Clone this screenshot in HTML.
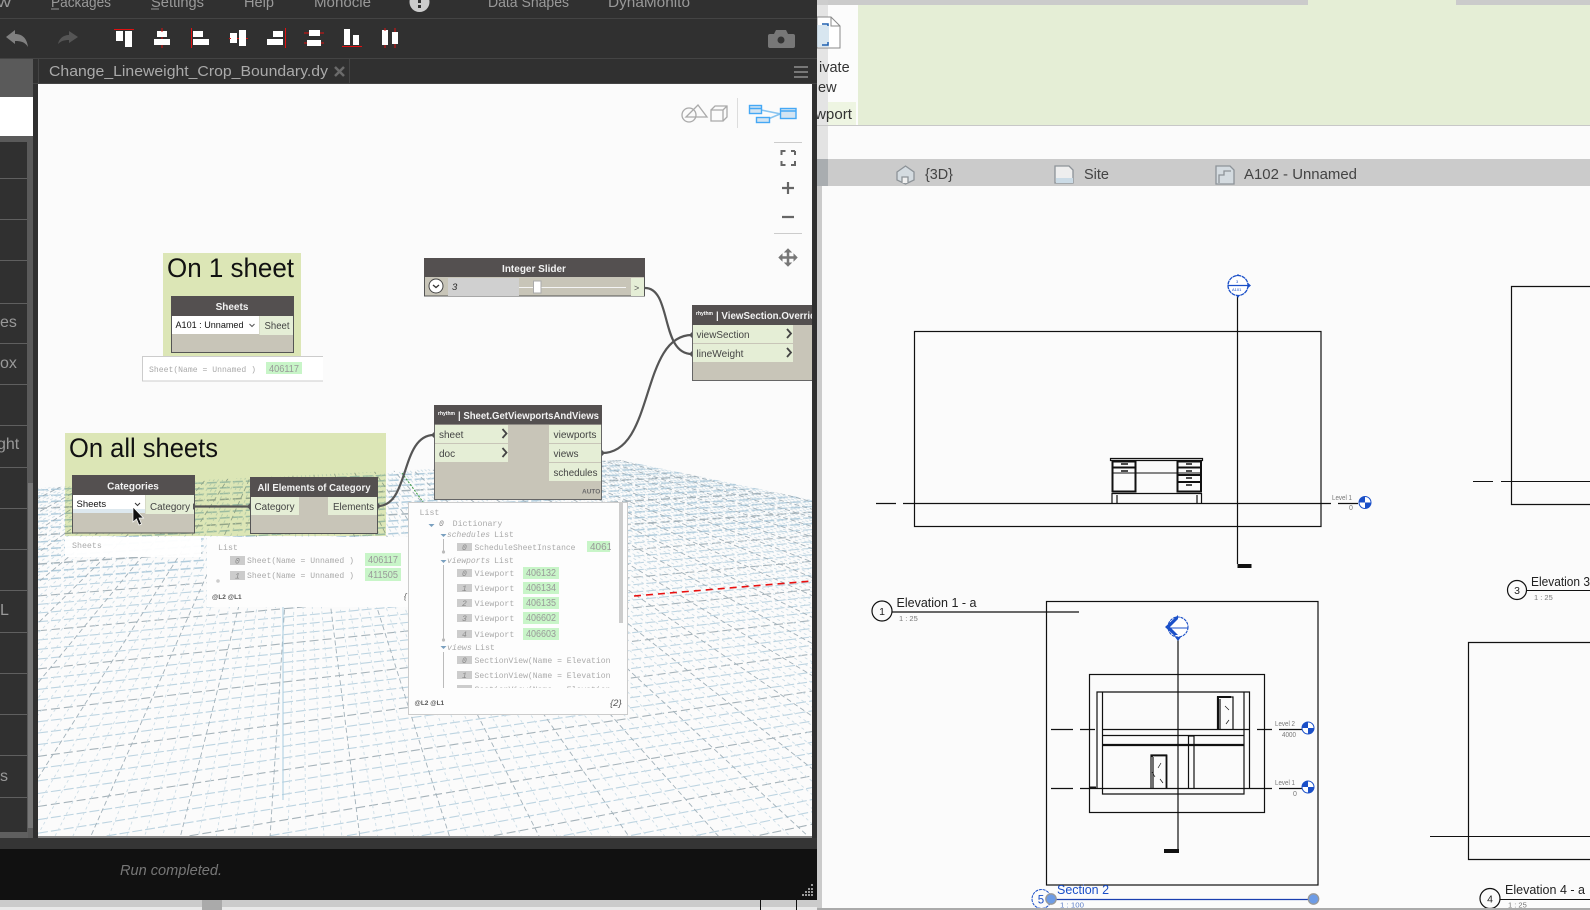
<!DOCTYPE html>
<html><head><meta charset="utf-8"><title>Dynamo on Revit</title>
<style>
html,body{margin:0;padding:0;width:1590px;height:910px;overflow:hidden;background:#fbfbfb}
svg{position:absolute;left:0;top:0;display:block}
text{font-family:"Liberation Sans",sans-serif;white-space:pre}
.m{font-size:15px;fill:#999}
.h{font-size:10px;font-weight:bold;fill:#f2f2f2;text-anchor:middle}
.p{font-size:10px;fill:#444}
.mono{font-family:"Liberation Mono",monospace;font-size:8.3px;fill:#aaa}
.idx{font-family:"Liberation Mono",monospace;font-size:8px;fill:#888;font-style:italic}
.num{font-size:10px;fill:#999}
.at{font-size:6.5px;fill:#555;font-weight:bold}
.lv{font-size:7px;fill:#777}
.el{font-size:12.5px;fill:#222}
.sc{font-size:7.5px;fill:#777}
.tab{font-size:14.5px;fill:#444}
.lab{font-size:16px;fill:#999}
#grid{mix-blend-mode:multiply}
</style></head><body>
<svg width="1590" height="910" viewBox="0 0 1590 910" xmlns="http://www.w3.org/2000/svg">
<defs><clipPath id="cv"><rect x="38" y="84" width="774" height="754"/></clipPath>
<clipPath id="gp"><polygon points="38,488 620,460 812,500 812,838 38,838"/></clipPath>
<clipPath id="vs"><rect x="692" y="300" width="120" height="90"/></clipPath>
<clipPath id="dp"><rect x="410" y="504" width="201" height="184"/></clipPath></defs>

<!-- Revit side -->
<rect x="817" y="0" width="773" height="5" fill="#cbcbcb"/>
<rect x="1308" y="0" width="148" height="5" fill="#e5eed6"/>
<rect x="858" y="5" width="732" height="120" fill="#e5eed6"/>
<rect x="817" y="5" width="41" height="120" fill="#fcfcfc"/>
<rect x="817" y="0" width="11" height="159" fill="#cfcfcf" opacity=".55"/>
<rect x="828" y="102" width="28" height="23" fill="#eef5e2"/>
<path d="M817 17h14l9 9v22h-23z" fill="#fff" stroke="#8a8a8a" stroke-width="1"/>
<path d="M831 17v9h9" fill="none" stroke="#8a8a8a"/>
<path d="M817 25h12v22h-12z" fill="#c7dcea" opacity=".7"/>
<path d="M822 24h6v2M828 42v3h-6" fill="none" stroke="#2060b0" stroke-width="1.5"/>
<text x="819" y="72" font-size="14.5" fill="#333">ivate</text>
<text x="818" y="92" font-size="14.5" fill="#333">ew</text>
<text x="815" y="119" font-size="14.5" fill="#333" textLength="37" lengthAdjust="spacingAndGlyphs">wport</text>
<rect x="817" y="125" width="773" height="1" fill="#c8c8c8"/>
<rect x="817" y="159" width="773" height="27" fill="#cbcbcb"/>
<rect x="817" y="159" width="11" height="27" fill="#a9adb0"/>
<rect x="817" y="186" width="5" height="724" fill="#cbcbcb"/>
<g fill="#d4dbe0" stroke="#8d9398" stroke-width="1.3">
<path d="M897 172l8.500-6 8.500 6v8l-8.500 4-8.500-4z"/><path d="M902 183v-6h6v6" fill="#f0f0f0"/>
<path d="M1056 166h14l4 4v13h-18z" fill="#eee" transform="translate(-1 0)"/>
<path d="M1216 166h14l4 4v14h-18z"/><path d="M1219 183v-8h5v-4h7" fill="none"/>
</g>
<path d="M1056 178h17v5h-17z" fill="#cbdbe6"/>
<text class="tab" x="925" y="179" textLength="28" lengthAdjust="spacingAndGlyphs">{3D}</text>
<text class="tab" x="1084" y="179" textLength="25" lengthAdjust="spacingAndGlyphs">Site</text>
<text class="tab" x="1244" y="179" textLength="113" lengthAdjust="spacingAndGlyphs">A102 - Unnamed</text>

<!-- drawing 1 -->
<g fill="none" stroke="#111" stroke-width="1.2">
<rect x="914.500" y="331.500" width="406.500" height="195"/>
<path d="M876 503.500h20M903 503.500h428M1338 503.500h20"/>
<path d="M1237.500 295v269"/>
<path d="M1110.500 458.500h92v2h-92z"/>
<path d="M1112 473h90" stroke-width="1"/>
<path stroke-width="2" d="M1112.500 461.500h23v30h-23zM1112.500 467.500h23M1177.500 461.500h23.500v30h-23.500zM1177.500 467.500h23.500M1177.500 475h23.500M1177.500 482h23.500"/>
<path d="M1112 493.500h89.500M1112 493v10M1201.500 493v10M1117 495v8M1197 495v8"/>
<path d="M1121 464h7M1121 471h7M1186 464h6M1186 471h6M1186 478h6M1186 485h6" stroke-width="1.500"/>
</g>
<rect x="1237.500" y="564" width="14" height="4" fill="#111"/>
<g fill="#fff" stroke="#1a4fc8" stroke-width="1.300">
<circle cx="1238" cy="285.500" r="10" stroke-dasharray="4 .6"/>
<path d="M1228 285.500h20" fill="none"/>
</g>
<path d="M1248 283l3 2.500-3 2.500zM1236 276l2-2 2 2zM1236 295h4l-2 3z" fill="#1a4fc8"/>
<text x="1236" y="283" font-size="4" fill="#1a4fc8">3</text><text x="1232" y="291" font-size="4" fill="#1a4fc8">A101</text>
<text class="lv" x="1332" y="500" textLength="20" lengthAdjust="spacingAndGlyphs">Level 1</text>
<text class="lv" x="1349" y="510">0</text>

<!-- drawing 2 -->
<path d="M892 612h187" stroke="#111" stroke-width="1.200" fill="none"/>
<circle cx="882" cy="611" r="10" fill="#fbfbfb" stroke="#111" stroke-width="1.200"/>
<text x="882" y="615" font-size="10.500" text-anchor="middle" fill="#222">1</text>
<text class="el" x="896.500" y="607" textLength="80" lengthAdjust="spacingAndGlyphs">Elevation 1 - a</text>
<text class="sc" x="899" y="621">1 : 25</text>
<g fill="none" stroke="#111" stroke-width="1.200">
<rect x="1046.500" y="601.500" width="271.500" height="283.500"/>
<rect x="1089.500" y="674.500" width="175" height="138"/>
<path d="M1097 788v-96h152.500v96"/><path d="M1102.500 692v102h141.500v-102"/>
<path d="M1051 729.500h22M1080 729.500h15M1102 729.500h147.500M1257 729.500h15M1279 729.500h24"/>
<path d="M1051 788.500h22M1080 788.500h192M1279 788.500h24"/>
<path d="M1102 735.500h142"/><path d="M1102 745h142" stroke-width="2.200"/>
<path d="M1188.500 788v-52h5.500v52"/>
<path d="M1217.500 729v-32h15.500v32M1220 729v-30"/><path d="M1218 729v-32h13" stroke-width="2"/>
<path d="M1151 788v-33h15.500v33M1153 788v-31"/><path d="M1152 757v-1.500h14.500v32.500" stroke-width="1.800"/>
<path d="M1178 625v228"/><path d="M1089 787.500h7" stroke-width="2"/>
<path d="M1225 706l4 4M1229 720l-3 4M1161 763l-3 5M1152 772l3 5M1160 779l3 4" stroke-width=".7"/>
</g>
<rect x="1164" y="849" width="15" height="4" fill="#111"/>
<g fill="#fff" stroke="#1a4fc8" stroke-width="1.100">
<circle cx="1178" cy="627" r="10" stroke-dasharray="3 .8"/><path d="M1168 628h20" fill="none"/>
</g>
<path d="M1165 627l13-12v4l-8 8 8 8 -3 0 3 4z" fill="#1a4fc8"/>
<path d="M1175 637h6l-3 4z" fill="#1a4fc8"/>
<text class="lv" x="1275" y="726" textLength="20" lengthAdjust="spacingAndGlyphs">Level 2</text>
<text class="lv" x="1282" y="737" textLength="14" lengthAdjust="spacingAndGlyphs">4000</text>
<text class="lv" x="1275" y="785" textLength="20" lengthAdjust="spacingAndGlyphs">Level 1</text>
<text class="lv" x="1293" y="796">0</text>
<!-- level heads -->
<g><circle cx="1365" cy="502.500" r="6" fill="#fff" stroke="#1a4fc8"/><path d="M1365 502.500v-6a6 6 0 0 0-6 6zM1365 502.500v6a6 6 0 0 0 6-6z" fill="#1a4fc8"/></g>
<g><circle cx="1308" cy="728" r="6" fill="#fff" stroke="#1a4fc8"/><path d="M1308 728v-6a6 6 0 0 0-6 6zM1308 728v6a6 6 0 0 0 6-6z" fill="#1a4fc8"/></g>
<g><circle cx="1308" cy="787" r="6" fill="#fff" stroke="#1a4fc8"/><path d="M1308 787v-6a6 6 0 0 0-6 6zM1308 787v6a6 6 0 0 0 6-6z" fill="#1a4fc8"/></g>

<!-- section 2 -->
<path d="M1051 899.500h262" stroke="#1a3fb0" stroke-width="1.300"/>
<circle cx="1041.500" cy="899" r="9.500" fill="#fbfbfb" stroke="#1a4fc8" stroke-dasharray="3 .8"/>
<text x="1041" y="903.500" font-size="11.500" text-anchor="middle" fill="#1a4fc8">5</text>
<text x="1057" y="894" font-size="13" fill="#1a4fc8" textLength="52" lengthAdjust="spacingAndGlyphs">Section 2</text>
<text x="1060" y="907.500" font-size="7.500" fill="#5f7fc8" textLength="24" lengthAdjust="spacingAndGlyphs">1 : 100</text>
<circle cx="1051" cy="899" r="5.200" fill="#6d9ce6" stroke="#999" stroke-width="1.300"/>
<circle cx="1313.500" cy="899" r="5.200" fill="#6d9ce6" stroke="#999" stroke-width="1.300"/>

<!-- right drawings -->
<g fill="none" stroke="#111" stroke-width="1.200">
<path d="M1590 286.500h-78.500v218h78.500"/>
<path d="M1473 481.500h20M1501 481.500h89" stroke-width="1"/>
<path d="M1590 642.500h-121.500v217h121.500"/>
<path d="M1430 836.500h160" stroke-width="1"/>
<path d="M1527 590.500h63M1500 899.500h90" stroke-width="1"/>
<circle cx="1517" cy="590" r="9.500"/><circle cx="1490" cy="898.500" r="10"/>
</g>
<text x="1517" y="594" font-size="10.500" text-anchor="middle" fill="#222">3</text>
<text x="1490" y="902.500" font-size="10.500" text-anchor="middle" fill="#222">4</text>
<text class="el" x="1531" y="586" textLength="59" lengthAdjust="spacingAndGlyphs">Elevation 3</text>
<text class="sc" x="1534" y="600">1 : 25</text>
<text class="el" x="1505" y="894" textLength="80" lengthAdjust="spacingAndGlyphs">Elevation 4 - a</text>
<text class="sc" x="1508" y="907.500">1 : 25</text>
<rect x="817" y="908" width="773" height="2" fill="#aaa"/>

<!-- bottom strip under dynamo -->
<rect x="0" y="900" width="821" height="7" fill="#cbcbcb"/>
<rect x="0" y="907" width="817" height="3" fill="#e9e9e9"/>
<rect x="202" y="900" width="20" height="10" fill="#aaa"/>
<path d="M760.500 900v10M796.500 900v10" stroke="#111"/>

<!-- Dynamo window -->
<rect x="0" y="0" width="817" height="900" fill="#303030"/>
<rect x="0" y="18" width="817" height="1" fill="#444"/>
<rect x="0" y="58" width="817" height="1" fill="#444"/>
<rect x="38" y="59" width="1" height="25" fill="#444"/><rect x="349" y="59" width="1" height="25" fill="#444"/>
<rect x="0" y="83" width="817" height="1" fill="#444"/>
<text class="m" x="-3" y="7" textLength="14" lengthAdjust="spacingAndGlyphs">w</text>
<text class="m" x="51" y="7" textLength="60" lengthAdjust="spacingAndGlyphs">Packages</text>
<text class="m" x="151" y="7" textLength="53" lengthAdjust="spacingAndGlyphs">Settings</text>
<text class="m" x="244" y="7" textLength="30" lengthAdjust="spacingAndGlyphs">Help</text>
<text class="m" x="314" y="7" textLength="57" lengthAdjust="spacingAndGlyphs">Monocle</text>
<text class="m" x="488" y="7" textLength="81" lengthAdjust="spacingAndGlyphs">Data Shapes</text>
<text class="m" x="608" y="7" textLength="82" lengthAdjust="spacingAndGlyphs">DynaMonito</text>
<path d="M51 9h8M151 9h8" stroke="#999"/>
<circle cx="419.500" cy="2" r="10" fill="#ccc"/>
<path d="M418 0h3v3h-3zM418 5h3v3h-3z" fill="#333"/>

<!-- toolbar icons -->
<path d="M6 37l9-7v4c8 0 12 5 13 13-3-5-7-6-13-6v3z" fill="#808080"/>
<path d="M78 37l-9-6v4c-6 0-10 4-11 9 3-3 6-4 11-4v3z" fill="#555"/>
<g fill="#fff">
<rect x="116" y="31" width="7" height="10"/><rect x="125" y="31" width="7" height="16"/>
<rect x="157" y="31" width="10" height="6"/><rect x="154" y="39" width="16" height="6"/>
<rect x="193" y="31" width="10" height="6"/><rect x="193" y="39" width="16" height="6"/>
<rect x="230" y="33" width="7" height="10"/><rect x="239" y="30" width="7" height="16"/>
<rect x="273" y="31" width="10" height="6"/><rect x="267" y="39" width="16" height="6"/>
<rect x="309" y="30" width="11" height="6"/><rect x="307" y="40" width="14" height="6"/>
<rect x="344" y="29" width="6" height="16"/><rect x="353" y="35" width="6" height="10"/>
<rect x="382" y="30" width="6" height="15"/><rect x="392" y="32" width="6" height="12"/>
</g>
<g stroke="#e01010" stroke-width="1" fill="none">
<path d="M114 29.500h20M162 28v4M162 37v2M162 45v3M191.500 28v20M229 38.500h2M237 38.500h2M246 38.500h2M285.500 28v20M304 33h5M320 33h4M304 43h3M321 43h3M342 46.500h20M385 28v3M385 45v3M395 28v4M395 44v4"/>
</g>
<rect x="768" y="34" width="27" height="14" rx="2" fill="#777"/><path d="M774 34l2-4h10l2 4z" fill="#777"/><circle cx="781" cy="40" r="3.500" fill="#333"/>
<path d="M794 67h14M794 72h14M794 77h14" stroke="#777" stroke-width="2"/>

<text x="49" y="76" font-size="15" fill="#aaa" textLength="279" lengthAdjust="spacingAndGlyphs">Change_Lineweight_Crop_Boundary.dy</text>
<path d="M335 67l9 9M344 67l-9 9" stroke="#6a6a6a" stroke-width="2.500"/>

<!-- left panel -->
<rect x="0" y="59" width="33" height="38" fill="#5a5a5a"/>
<rect x="0" y="97" width="33" height="39" fill="#fff"/>
<rect x="0" y="136" width="33" height="702" fill="#5a5a5a"/>
<rect x="28" y="483" width="5" height="345" fill="#777"/>
<rect x="0" y="142" width="27" height="690" fill="#303030"/>
<g fill="#5f5f5f">
<rect y="178" width="27" height="1"/><rect y="219" width="27" height="1"/><rect y="260" width="27" height="1"/><rect y="303" width="27" height="1"/><rect y="343" width="27" height="1"/><rect y="384" width="27" height="1"/><rect y="425" width="27" height="1"/><rect y="467" width="27" height="1"/><rect y="508" width="27" height="1"/><rect y="549" width="27" height="1"/><rect y="590" width="27" height="1"/><rect y="632" width="27" height="1"/><rect y="673" width="27" height="1"/><rect y="714" width="27" height="1"/><rect y="755" width="27" height="1"/><rect y="797" width="27" height="1"/>
</g>
<text class="lab" x="0" y="327">es</text><text class="lab" x="0" y="368">ox</text><text class="lab" x="-3" y="449">ght</text><text class="lab" x="0" y="615">L</text><text class="lab" x="0" y="781">s</text>

<!-- canvas -->
<rect x="38" y="84" width="774" height="754" fill="#fbfbfb"/>
<rect x="163" y="253" width="138" height="103" fill="#dce6b6"/>
<rect x="65" y="433" width="321" height="103" fill="#dce6b6"/>
<g id="grid" clip-path="url(#gp)"></g>
<rect x="38" y="836" width="774" height="2" fill="#888"/>
<g clip-path="url(#cv)">
<path d="M283 607v193" stroke="#a8cde0"/>
<path d="M634 596L812 581" stroke="#e81010" stroke-width="1.600" stroke-dasharray="7 5"/>
<path d="M402 473L423 502" stroke="#3a9a3a" stroke-dasharray="2 1.500"/>
</g>
<text x="167" y="277" font-size="27" fill="#111" textLength="127" lengthAdjust="spacingAndGlyphs">On 1 sheet</text>
<text x="69" y="457" font-size="27" fill="#111" textLength="149" lengthAdjust="spacingAndGlyphs">On all sheets</text>

<!-- canvas icons -->
<g fill="none" stroke="#aaa" stroke-width="1.300">
<circle cx="689" cy="115" r="7"/><path d="M698 105l9 12h-21z"/>
<path d="M711 110h12v11h-12zM711 110l4-4h12v11l-4 4M723 110l4-4"/>
</g>
<rect x="737" y="98" width="1" height="30" fill="#ddd"/>
<g fill="#d3e4f2" stroke="#45a8f5" stroke-width="1.400">
<path d="M761 110l20 4M768 119l12-5" stroke="#88c4f0" fill="none" stroke-width="1.500"/>
<rect x="749.500" y="105.500" width="12" height="8"/><rect x="756.500" y="117.500" width="13" height="5"/><rect x="780.500" y="108.500" width="15.500" height="10"/>
<path d="M750 108.500h11M781 111h15"/>
</g>
<rect x="774" y="142" width="28" height="1" fill="#ccc"/><rect x="774" y="233" width="28" height="1" fill="#ccc"/>
<path d="M781.500 155v-4h4M795 151h-4M795 151v4M781.500 161v4h4M795 161v4h-4" fill="none" stroke="#666" stroke-width="2"/>
<path d="M788 182v12M782 188h12M782 217h12" stroke="#666" stroke-width="2.200"/>
<path d="M788 251v13M781 257.500h14" stroke="#777" stroke-width="2.500"/>
<path d="M785 252l3-3 3 3zM785 263l3 3 3-3zM782 254.500l-3 3 3 3zM794 254.500l3 3-3 3z" fill="#777" stroke="#777"/>

<!-- wires -->
<g fill="none" stroke="#555" stroke-width="2.200">
<path d="M195 506.500H250"/>
<path d="M378 506C410 506 400 435 434 435"/>
<path d="M602 453C655 453 640 335 692 335"/>
<path d="M645 288C672 288 660 354 692 354"/>
</g>

<!-- Sheets node -->
<rect x="171.500" y="296.500" width="122" height="56" fill="#c8c5b8" stroke="#555"/>
<rect x="171" y="296" width="123" height="20" fill="#545050"/>
<text class="h" x="232" y="310">Sheets</text>
<rect x="172" y="316" width="87" height="18" fill="#fff"/>
<rect x="259.500" y="316" width="33.500" height="19" fill="#e5eed6"/>
<text x="175.500" y="328" font-size="9.500" fill="#111" textLength="68" lengthAdjust="spacingAndGlyphs">A101 : Unnamed</text>
<path d="M249.500 324l2.500 2.500 2.500-2.500" fill="none" stroke="#555"/>
<text class="p" x="264.500" y="329" textLength="25" lengthAdjust="spacingAndGlyphs">Sheet</text>
<path d="M323 356.500H142.500v24.500H323" fill="#fff" stroke="#ccc"/>
<text class="mono" x="149" y="372" textLength="107" lengthAdjust="spacingAndGlyphs">Sheet(Name = Unnamed )</text>
<rect x="266" y="362" width="36" height="12" fill="#c8f5c8"/>
<text class="num" x="269" y="372" textLength="30" lengthAdjust="spacingAndGlyphs">406117</text>

<!-- Slider node -->
<rect x="424.500" y="258.500" width="220" height="37.500" fill="#c8c5b8" stroke="#555"/>
<rect x="424" y="258" width="221" height="19" fill="#545050"/>
<text class="h" x="534" y="272">Integer Slider</text>
<rect x="448" y="278" width="71" height="18" fill="#d0d0d0"/>
<rect x="631" y="278" width="13" height="18" fill="#e5eed6"/>
<circle cx="436" cy="286" r="7" fill="#fff" stroke="#444"/>
<path d="M433 285l3 2.500 3-2.500" fill="none" stroke="#333" stroke-width="1.300"/>
<text x="452" y="290" font-size="9.500" font-style="italic" fill="#222">3</text>
<path d="M519 287.500h107" stroke="#f4f4f4"/>
<rect x="533.500" y="281" width="7.500" height="12" fill="#fff" stroke="#aaa"/>
<text x="634" y="291" font-size="9" fill="#555">&gt;</text>

<!-- Categories node -->
<rect x="72.500" y="475.500" width="122" height="57.500" fill="#c8c5b8" stroke="#555"/>
<rect x="72" y="475" width="123" height="20" fill="#545050"/>
<text class="h" x="133" y="489.500">Categories</text>
<rect x="73" y="495" width="72" height="17" fill="#fff"/><rect x="73" y="509" width="72" height="4" fill="#dde8ee"/>
<rect x="145.500" y="495" width="48.500" height="19" fill="#e5eed6"/>
<text x="76.500" y="507" font-size="9.500" fill="#111">Sheets</text>
<path d="M135 503l2.500 2.500 2.500-2.500" fill="none" stroke="#333"/>
<text class="p" x="150" y="510" textLength="40" lengthAdjust="spacingAndGlyphs">Category</text>
<path d="M133 507v15l3.500-3 2.500 6 2.500-1-2.500-6h4.500z" fill="#111" stroke="#fff" stroke-width=".7"/>

<!-- All Elements node -->
<rect x="250.500" y="477.500" width="127" height="56" fill="#c8c5b8" stroke="#555"/>
<rect x="250" y="477" width="128" height="20" fill="#545050"/>
<text class="h" x="314" y="491" textLength="113" lengthAdjust="spacingAndGlyphs">All Elements of Category</text>
<rect x="251" y="497" width="48" height="18" fill="#e5eed6"/><rect x="328" y="497" width="49" height="18" fill="#e5eed6"/>
<text class="p" x="254.500" y="510" textLength="40" lengthAdjust="spacingAndGlyphs">Category</text>
<text class="p" x="333" y="510" textLength="41" lengthAdjust="spacingAndGlyphs">Elements</text>
<path d="M193 503l3 3.500-3 3.500zM250 503l-3 3.500 3 3.500zM378 503l3 3-3 3z" fill="#555"/>

<!-- GetViewports node -->
<rect x="434.500" y="405.500" width="167" height="94" fill="#c8c5b8" stroke="#666"/>
<rect x="434" y="405" width="168" height="19.500" fill="#545050"/>
<text x="438" y="415" font-size="5" font-weight="bold" fill="#fff">rhythm</text>
<text x="458" y="419" font-size="10.500" font-weight="bold" fill="#f2f2f2" textLength="141" lengthAdjust="spacingAndGlyphs">| Sheet.GetViewportsAndViews</text>
<g fill="#e5eed6">
<rect x="435" y="425" width="73" height="18"/><rect x="435" y="444" width="73" height="18"/>
<rect x="549" y="425" width="52" height="18"/><rect x="549" y="444" width="52" height="18"/><rect x="549" y="463" width="52" height="18"/>
</g>
<text class="p" x="439" y="438">sheet</text><text class="p" x="439" y="457">doc</text>
<text class="p" x="553.500" y="438" textLength="43" lengthAdjust="spacingAndGlyphs">viewports</text>
<text class="p" x="553.500" y="457">views</text>
<text class="p" x="553.500" y="476" textLength="44" lengthAdjust="spacingAndGlyphs">schedules</text>
<text x="582" y="493.500" font-size="6.500" font-weight="bold" fill="#6b6b6b">AUTO</text>
<path d="M502.500 429l4 4.500-4 4.500M502.500 448l4 4.500-4 4.500" fill="none" stroke="#444" stroke-width="1.800"/>
<path d="M434 432l-3 3 3 3zM602 450l3 3-3 3z" fill="#555"/>

<!-- ViewSection node -->
<g clip-path="url(#vs)">
<rect x="692.500" y="305.500" width="130" height="75" fill="#c8c5b8" stroke="#666"/>
<rect x="692" y="305" width="130" height="20" fill="#545050"/>
<text x="696" y="315" font-size="5" font-weight="bold" fill="#fff">rhythm</text>
<text x="716" y="319" font-size="10.500" font-weight="bold" fill="#f2f2f2" textLength="100" lengthAdjust="spacingAndGlyphs">| ViewSection.Overrid</text>
<rect x="693" y="325" width="100" height="18" fill="#e5eed6"/><rect x="693" y="344" width="100" height="18" fill="#e5eed6"/>
<text class="p" x="696.500" y="338" textLength="53" lengthAdjust="spacingAndGlyphs">viewSection</text>
<text class="p" x="696.500" y="357" textLength="47" lengthAdjust="spacingAndGlyphs">lineWeight</text>
<path d="M787 329l4 4.500-4 4.500M787 348l4 4.500-4 4.500" fill="none" stroke="#444" stroke-width="1.800"/>
</g>
<path d="M692 332l-3 3 3 3zM692 351l-3 3 3 3z" fill="#555"/>

<!-- previews -->
<rect x="65" y="537" width="136" height="20" fill="#fff" opacity=".96"/>
<text class="mono" x="72" y="548">Sheets</text>
<rect x="207" y="537" width="201" height="70" fill="#fdfdfd"/>
<text class="mono" x="218" y="550">List</text>
<rect x="230" y="556" width="15" height="9" fill="#ccc"/><rect x="230" y="571" width="15" height="9" fill="#ccc"/>
<text class="idx" x="235" y="563.500">0</text><text class="idx" x="235" y="578.500">1</text>
<text class="mono" x="247" y="563" textLength="107" lengthAdjust="spacingAndGlyphs">Sheet(Name = Unnamed )</text>
<text class="mono" x="247" y="578" textLength="107" lengthAdjust="spacingAndGlyphs">Sheet(Name = Unnamed )</text>
<rect x="365" y="553" width="36" height="13" fill="#c8f5c8"/><rect x="365" y="568" width="36" height="13" fill="#c8f5c8"/>
<text class="num" x="368" y="563" textLength="30" lengthAdjust="spacingAndGlyphs">406117</text>
<text class="num" x="368" y="578" textLength="30" lengthAdjust="spacingAndGlyphs">411505</text>
<circle cx="218" cy="581" r="1.800" fill="#ccc"/>
<text class="at" x="212" y="599">@L2 @L1</text>
<text x="404" y="599" font-size="8" font-style="italic" fill="#555">{</text>

<rect x="408.500" y="502.500" width="219" height="212" fill="#fdfdfd" stroke="#ccc"/>
<rect x="619" y="503" width="4" height="120" fill="#ccc"/>
<g clip-path="url(#dp)">
<path d="M443.500 539v12M443.500 565v75M443.500 652v40" stroke="#bbb" fill="none"/>
<circle cx="443.500" cy="552" r="1.600" fill="#bbb"/><circle cx="443.500" cy="640" r="1.600" fill="#bbb"/>
<path d="M428.500 524h6l-3 3zM440.500 534h6l-3 3zM440.500 560h6l-3 3zM440.500 646h6l-3 3z" fill="#7aa0bf"/>
<text class="mono" x="419.500" y="515">List</text>
<text class="idx" x="439" y="526">0</text>
<text class="mono" x="452.600" y="526">Dictionary</text>
<text class="mono" x="447" y="537" font-style="italic" textLength="43" lengthAdjust="spacingAndGlyphs">schedules</text><text class="mono" x="494" y="537">List</text>
<text class="mono" x="447" y="563" font-style="italic" textLength="43" lengthAdjust="spacingAndGlyphs">viewports</text><text class="mono" x="494" y="563">List</text>
<text class="mono" x="447" y="650" font-style="italic">views</text><text class="mono" x="475" y="650">List</text>
<g fill="#ccc">
<rect x="457" y="543" width="15" height="8"/><rect x="457" y="569" width="15" height="8"/><rect x="457" y="584" width="15" height="8"/><rect x="457" y="599" width="15" height="8"/><rect x="457" y="614" width="15" height="8"/><rect x="457" y="630" width="15" height="8"/><rect x="457" y="656" width="15" height="8"/><rect x="457" y="671" width="15" height="8"/><rect x="457" y="685" width="15" height="8"/>
</g>
<g fill="#c8f5c8">
<rect x="587" y="541" width="23" height="11"/><rect x="523" y="567" width="36" height="12"/><rect x="523" y="582" width="36" height="12"/><rect x="523" y="597" width="36" height="12"/><rect x="523" y="612" width="36" height="12"/><rect x="523" y="628" width="36" height="12"/>
</g>
<text class="idx" x="462" y="550">0</text><text class="idx" x="462" y="576">0</text><text class="idx" x="462" y="591">1</text><text class="idx" x="462" y="606">2</text><text class="idx" x="462" y="621">3</text><text class="idx" x="462" y="637">4</text><text class="idx" x="462" y="663">0</text><text class="idx" x="462" y="678">1</text>
<text class="mono" x="474.500" y="550" textLength="101" lengthAdjust="spacingAndGlyphs">ScheduleSheetInstance</text>
<text class="num" x="590" y="550">4061</text>
<text class="mono" x="474.500" y="576">Viewport</text><text class="mono" x="474.500" y="591">Viewport</text><text class="mono" x="474.500" y="606">Viewport</text><text class="mono" x="474.500" y="621">Viewport</text><text class="mono" x="474.500" y="637">Viewport</text>
<text class="num" x="526" y="576" textLength="30" lengthAdjust="spacingAndGlyphs">406132</text>
<text class="num" x="526" y="591" textLength="30" lengthAdjust="spacingAndGlyphs">406134</text>
<text class="num" x="526" y="606" textLength="30" lengthAdjust="spacingAndGlyphs">406135</text>
<text class="num" x="526" y="621" textLength="30" lengthAdjust="spacingAndGlyphs">406602</text>
<text class="num" x="526" y="637" textLength="30" lengthAdjust="spacingAndGlyphs">406603</text>
<text class="mono" x="474.500" y="663" textLength="136" lengthAdjust="spacingAndGlyphs">SectionView(Name = Elevation</text>
<text class="mono" x="474.500" y="678" textLength="136" lengthAdjust="spacingAndGlyphs">SectionView(Name = Elevation</text>
<text class="mono" x="474.500" y="692" textLength="136" lengthAdjust="spacingAndGlyphs">SectionView(Name = Elevation</text>
</g>
<text class="at" x="414.500" y="705">@L2 @L1</text>
<text x="610" y="706" font-size="9.500" font-style="italic" fill="#555">{2}</text>

<!-- window chrome overlays -->
<rect x="812" y="84" width="5" height="766" fill="#303030"/>
<rect x="0" y="838" width="817" height="11" fill="#353535"/>
<rect x="0" y="849" width="817" height="51" fill="#111"/>
<rect x="0" y="832" width="28" height="6" fill="#5f5f5f"/>
<text x="120" y="875" font-size="15" font-style="italic" fill="#777" textLength="102" lengthAdjust="spacingAndGlyphs">Run completed.</text>
<g fill="#999">
<rect x="811" y="884" width="2" height="2"/>
<rect x="808" y="888" width="2" height="2"/><rect x="811" y="888" width="2" height="2"/>
<rect x="805" y="891" width="2" height="2"/><rect x="808" y="891" width="2" height="2"/><rect x="811" y="891" width="2" height="2"/>
<rect x="802" y="894" width="2" height="2"/><rect x="805" y="894" width="2" height="2"/><rect x="808" y="894" width="2" height="2"/><rect x="811" y="894" width="2" height="2"/>
</g>
</svg>
<script>
(function(){
var g=document.getElementById('grid'),ns='http://www.w3.org/2000/svg';
var X0=38,X1=812,Y0=450,Y1=838;
function clip(a,b){var t0=0,t1=1,dx=b[0]-a[0],dy=b[1]-a[1],p=[-dx,dx,-dy,dy],q=[a[0]-X0,X1-a[0],a[1]-Y0,Y1-a[1]];
 for(var i=0;i<4;i++){if(p[i]==0){if(q[i]<0)return null;}else{var r=q[i]/p[i];if(p[i]<0){if(r>t1)return null;if(r>t0)t0=r;}else{if(r<t0)return null;if(r<t1)t1=r;}}}
 return[[a[0]+t0*dx,a[1]+t0*dy],[a[0]+t1*dx,a[1]+t1*dy]];}
function L(a,b,col,w,dash){var c=clip(a,b);if(!c)return;var l=document.createElementNS(ns,'line');l.setAttribute('x1',c[0][0].toFixed(1));l.setAttribute('y1',c[0][1].toFixed(1));l.setAttribute('x2',c[1][0].toFixed(1));l.setAttribute('y2',c[1][1].toFixed(1));l.setAttribute('stroke',col);l.setAttribute('stroke-width',w);l.setAttribute('stroke-dasharray',dash);g.appendChild(l);}
var V2=[300,365],i=0,y=484;
/* shallow rising family: heavier and bluer in the far field */
while(y<1000){
 var maj=i%4==0,far=y<580;
 L([38,y],[3000,365],maj?'#a9b6bd':(far?'#b4d0e0':'#c0d8e5'),far?1.5:1.1,maj?'9 4':'10 3');
 y+=6+Math.max(0,y-490)*8/350;i++;
}
/* steep family radiating from far point */
i=0;
for(var x=-720;x<2120;x+=18){
 var mj=i%5==0;
 L(V2,[x,838],mj?'#a5b4bd':'#d2e2eb',mj?.9:.9,mj?'5 3':'3 3');
 i++;
}
})();
</script>
</body></html>
